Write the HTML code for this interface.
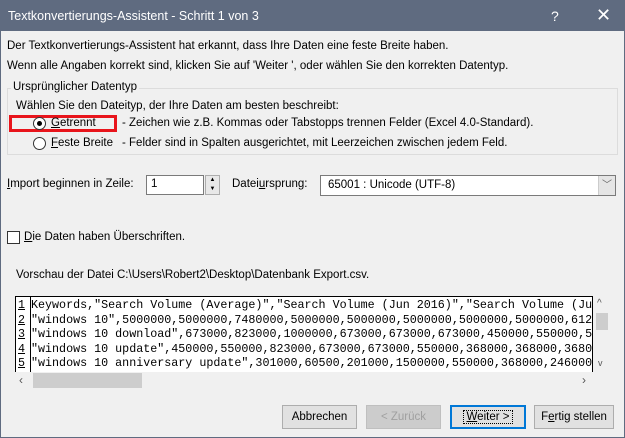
<!DOCTYPE html>
<html><head><meta charset="utf-8"><style>
*{margin:0;padding:0;box-sizing:border-box}
body{width:625px;height:438px;background:#5f6b80;font-family:"Liberation Sans",sans-serif;font-size:11.5px;color:#000;position:relative;overflow:hidden}
.a{position:absolute;white-space:nowrap}
#win{position:absolute;left:1px;top:31px;width:623px;height:406px;background:#f0f0f0}
.title{color:#fff;font-size:12.5px;left:8px;top:9px}
u{text-decoration:underline}
.btn{position:absolute;top:405px;height:24px;background:#e1e1e1;border:1px solid #adadad;text-align:center;line-height:22px;font-size:11.5px}
.mono{font-family:"Liberation Mono",monospace;font-size:11.7px;}
</style></head><body>
<div class="a title">Textkonvertierungs-Assistent - Schritt 1 von 3</div>
<div class="a" style="color:#fff;left:551px;top:8px;font-size:14px">?</div>
<div class="a" style="color:#fff;left:596px;top:5px;font-size:18px">✕</div>
<div id="win"></div>
<div class="a" style="left:7px;top:40px">Der Textkonvertierungs-Assistent hat erkannt, dass Ihre Daten eine feste Breite haben.</div>
<div class="a" style="left:7px;top:60px">Wenn alle Angaben korrekt sind, klicken Sie auf 'Weiter ', oder wählen Sie den korrekten Datentyp.</div>
<div class="a" style="left:7px;top:88px;width:611px;height:67px;border:1px solid #dcdcdc"></div>
<div class="a" style="left:11px;top:81px;background:#f0f0f0;padding:0 2px">Ursprünglicher Datentyp</div>
<div class="a" style="left:16px;top:100px">Wählen Sie den Dateityp, der Ihre Daten am besten beschreibt:</div>
<div class="a" style="left:9px;top:115px;width:108px;height:17px;border:3px solid #e8141b"></div>
<div class="a" style="left:33px;top:117px;width:13px;height:13px;border:1px solid #333;border-radius:50%;background:#fff"><div style="margin:3px;width:5px;height:5px;border-radius:50%;background:#000"></div></div>
<div class="a" style="left:51px;top:117px"><u>G</u>etrennt</div>
<div class="a" style="left:33px;top:137px;width:13px;height:13px;border:1px solid #333;border-radius:50%;background:#fff"></div>
<div class="a" style="left:51px;top:137px"><u>F</u>este Breite</div>
<div class="a" style="left:122px;top:117px">- Zeichen wie z.B. Kommas oder Tabstopps trennen Felder (Excel 4.0-Standard).</div>
<div class="a" style="left:122px;top:137px">- Felder sind in Spalten ausgerichtet, mit Leerzeichen zwischen jedem Feld.</div>
<div class="a" style="left:7px;top:178px"><u>I</u>mport beginnen in Zeile:</div>
<div class="a" style="left:146px;top:175px;width:58px;height:20px;border:1px solid #7a7a7a;background:#fff;padding:2px 4px">1</div>
<div class="a" style="left:205px;top:175px;width:15px;height:20px;border:1px solid #adadad;background:#e8e8e8;font-size:6px;line-height:9px;text-align:center">▲<br>▼</div>
<div class="a" style="left:232px;top:178px">Datei<u>u</u>rsprung:</div>
<div class="a" style="left:320px;top:175px;width:296px;height:21px;border:1px solid #7a7a7a;background:#fff;padding:3px 7px">65001 : Unicode (UTF-8)</div>
<div class="a" style="left:598px;top:176px;width:17px;height:19px;background:#e5e5e5;border-left:1px solid #ccc;color:#666;text-align:center;font-size:10px;line-height:19px">﹀</div>
<div class="a" style="left:7px;top:231px;width:13px;height:13px;border:1px solid #333;background:#fff"></div>
<div class="a" style="left:24px;top:231px"><u>D</u>ie Daten haben Überschriften.</div>
<div class="a" style="left:16px;top:269px">Vorschau der Datei C:\Users\Robert2\Desktop\Datenbank Export.csv.</div>
<div class="a" style="left:15px;top:296px;width:578px;height:76px;border:1px solid #000;border-bottom:none;background:#fff;overflow:hidden">
<div class="a" style="left:14px;top:0;width:1px;height:76px;background:#000"></div>
<div class="a mono" style="left:2px;top:1px;line-height:14.6px"><u>1</u><br><u>2</u><br><u>3</u><br><u>4</u><br><u>5</u></div>
<div class="a mono" style="left:15px;top:1px;line-height:14.6px">Keywords,"Search Volume (Average)","Search Volume (Jun 2016)","Search Volume (Ju<br>"windows 10",5000000,5000000,7480000,5000000,5000000,5000000,5000000,5000000,612<br>"windows 10 download",673000,823000,1000000,673000,673000,673000,450000,550000,5<br>"windows 10 update",450000,550000,823000,673000,673000,550000,368000,368000,3680<br>"windows 10 anniversary update",301000,60500,201000,1500000,550000,368000,246000</div>
</div>
<div class="a" style="left:593px;top:296px;width:18px;height:76px;background:#f0f0f0"></div>
<div class="a" style="left:596px;top:313px;width:12px;height:17px;background:#cdcdcd"></div>
<div class="a" style="left:597px;top:298px;color:#555;font-size:10px">^</div>
<div class="a" style="left:598px;top:358px;color:#555;font-size:9px">v</div>
<div class="a" style="left:15px;top:372px;width:578px;height:18px;background:#f0f0f0"></div>
<div class="a" style="left:33px;top:373px;width:109px;height:15px;background:#cdcdcd"></div>
<div class="a" style="left:19px;top:373px;color:#555;font-size:12px">‹</div>
<div class="a" style="left:582px;top:373px;color:#555;font-size:12px">›</div>
<div class="btn" style="left:282px;width:75px">Abbrechen</div>
<div class="btn" style="left:366px;width:75px;background:#cccccc;border-color:#bfbfbf;color:#a0a0a0">&lt; Zurück</div>
<div class="btn" style="left:450px;width:76px;border:2px solid #0078d7;line-height:20px"><span style="outline:1px dotted #000;padding:0 3px"><u>W</u>eiter &gt;</span></div>
<div class="btn" style="left:534px;width:80px">F<u>e</u>rtig stellen</div>
</body></html>
